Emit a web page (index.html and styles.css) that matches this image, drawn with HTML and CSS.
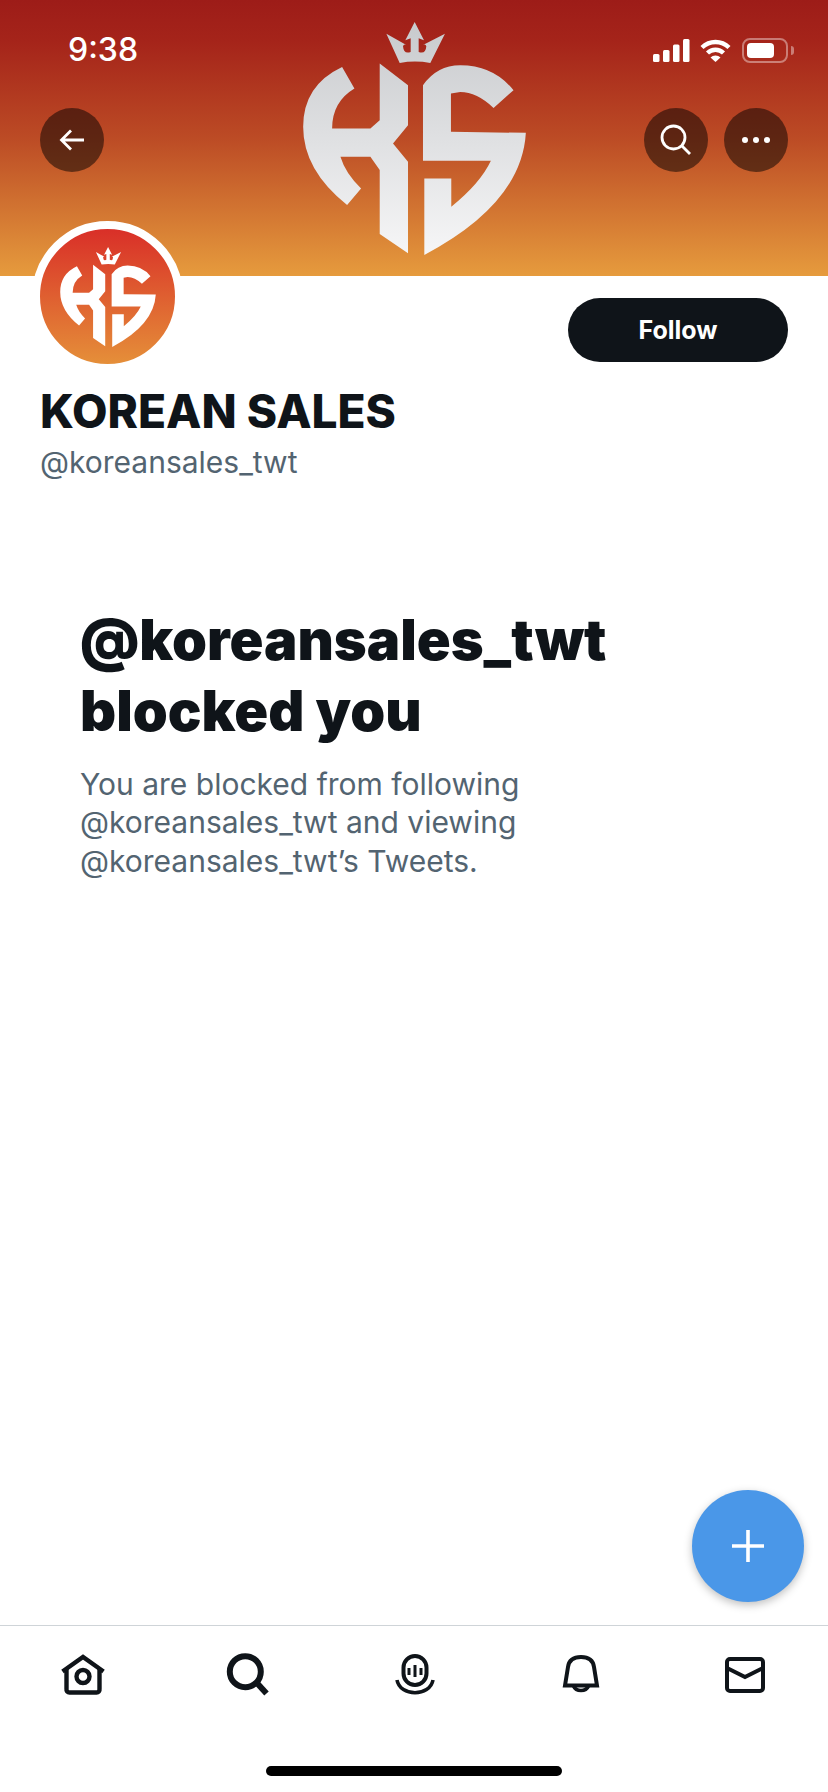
FILE: index.html
```html
<!DOCTYPE html>
<html lang="en">
<head>
    <meta charset="UTF-8">
    <meta name="viewport" content="width=device-width, initial-scale=1.0">
    <title>KOREAN SALES</title>
    <link rel="stylesheet" href="styles.css">
</head>
<body>
    <svg class="defs" width="0" height="0">
        <defs>
            <linearGradient id="logo-grad" gradientUnits="userSpaceOnUse" x1="0" y1="35" x2="0" y2="735">
                <stop offset="0" stop-color="#c8cacd"/>
                <stop offset="1" stop-color="#f6f6f7"/>
            </linearGradient>
            <g id="ks-logo">
                <path d="M403 35 L431 90 L415 84 L415 125 Q436 133 438 108 Q436 100 428 104 L494 70 L450 158 Q404 150 358 158 L318 70 L378 104 Q370 100 368 108 Q370 133 391 125 L391 84 L375 90 Z"/>
                <path d="M185 170 L222 235 Q155 275 155 355 L270 355 L298 330 L298 160 L383 225 L383 345 L338 400 L383 455 L383 730 L298 672 L298 480 L270 440 L180 440 Q195 490 242 535 L200 585 Q68 480 68 350 Q68 225 185 170 Z"/>
                <path d="M428 452 L428 225 Q470 165 540 165 Q640 165 700 240 L640 293 Q590 245 540 245 L512 250 L512 365 L737 368 Q725 580 432 735 L432 505 L513 505 L513 590 Q600 520 632 452 Z"/>
            </g>
        </defs>
    </svg>

    <div class="app">
        <header class="banner">
            <svg class="banner-logo" viewBox="68 35 669 700" fill="url(#logo-grad)"><use href="#ks-logo"/></svg>
            <div class="status-bar">
                <span class="clock">9:38</span>
                <div class="status-icons">
                    <svg class="signal" width="37" height="23" viewBox="0 0 37 23" fill="#fff">
                        <rect x="0" y="15" width="6.5" height="8" rx="1.5"/>
                        <rect x="10" y="11" width="6.5" height="12" rx="1.5"/>
                        <rect x="20" y="5.5" width="6.5" height="17.5" rx="1.5"/>
                        <rect x="30" y="0" width="6.5" height="23" rx="1.5"/>
                    </svg>
                    <svg class="wifi" width="31" height="24" viewBox="0 0 31 24" fill="none" stroke="#fff">
                        <path d="M2 9.5 A19.5 19.5 0 0 1 29 9.5" stroke-width="4.4"/>
                        <path d="M7.5 15 A11.5 11.5 0 0 1 23.5 15" stroke-width="4.4"/>
                        <path d="M15.5 24 L10.5 19.5 A7 7 0 0 1 20.5 19.5 Z" fill="#fff" stroke="none"/>
                    </svg>
                    <div class="battery"><div class="battery-level"></div></div>
                    <div class="battery-nub"></div>
                </div>
            </div>
            <div class="banner-nav">
                <button class="round-btn">
                    <svg width="30" height="30" viewBox="0 0 30 30" fill="none" stroke="#fff" stroke-width="2.8">
                        <path d="M27 15 H5 M14 5.5 L4.5 15 L14 24.5"/>
                    </svg>
                </button>
                <div class="nav-right">
                    <button class="round-btn">
                        <svg width="34" height="34" viewBox="0 0 34 34" fill="none" stroke="#fff" stroke-width="2.8">
                            <circle cx="14.5" cy="14.5" r="11.5"/>
                            <path d="M23 23 L31 31"/>
                        </svg>
                    </button>
                    <button class="round-btn">
                        <svg width="30" height="8" viewBox="0 0 30 8" fill="#fff">
                            <circle cx="4" cy="4" r="3"/>
                            <circle cx="15" cy="4" r="3"/>
                            <circle cx="26" cy="4" r="3"/>
                        </svg>
                    </button>
                </div>
            </div>
        </header>

        <main class="content">
            <div class="profile-top">
                <div class="avatar">
                    <svg class="avatar-logo" viewBox="68 35 669 700" fill="#fff"><use href="#ks-logo"/></svg>
                </div>
                <button class="follow-btn">Follow</button>
            </div>
            <div class="profile-names">
                <h2 class="name">KOREAN SALES</h2>
                <div class="handle">@koreansales_twt</div>
            </div>
            <section class="blocked">
                <h1>@koreansales_twt<br>blocked you</h1>
                <p>You are blocked from following<br>@koreansales_twt and viewing<br>@koreansales_twt’s Tweets.</p>
            </section>
        </main>

        <button class="fab">
            <svg width="34" height="34" viewBox="0 0 34 34" fill="none" stroke="#fff" stroke-width="3.6">
                <path d="M17 1 V33 M1 17 H33"/>
            </svg>
        </button>

        <footer class="tabbar">
            <nav class="tabs">
                <a class="tab">
                    <svg width="48" height="48" viewBox="0 0 48 48" fill="none" stroke="#0f1419" stroke-width="4.4">
                        <path d="M3.5 21.5 L24 7 L44.5 21.5"/>
                        <path d="M7.5 18 V39 A3 3 0 0 0 10.5 42.5 H37.5 A3 3 0 0 0 40.5 39 V18"/>
                        <circle cx="24" cy="26.5" r="6.5"/>
                    </svg>
                </a>
                <a class="tab">
                    <svg width="48" height="48" viewBox="0 0 48 48" fill="none" stroke="#0f1419" stroke-width="6">
                        <circle cx="21.3" cy="21.7" r="15.5"/>
                        <path d="M32.5 32.5 L42.5 43.5"/>
                    </svg>
                </a>
                <a class="tab">
                    <svg width="48" height="48" viewBox="0 0 48 48" fill="none" stroke="#0f1419" stroke-width="4">
                        <rect x="13.5" y="6" width="23" height="29" rx="11.5"/>
                        <path d="M19 18 V25 M25 15 V27 M31 18 V25" stroke-width="3"/>
                        <path d="M7 30 C10 47 40 47 43 30" stroke-width="3.6"/>
                    </svg>
                </a>
                <a class="tab">
                    <svg width="48" height="48" viewBox="0 0 48 48" fill="none" stroke="#0f1419" stroke-width="4">
                        <path d="M9 35.5 L12 17 C13 10 18 7 25 7 C32 7 37 10 38 17 L41 35.5 Z"/>
                        <path d="M17.5 36 A8 7 0 0 0 32.5 36" stroke-width="3.6"/>
                    </svg>
                </a>
                <a class="tab">
                    <svg width="48" height="48" viewBox="0 0 48 48" fill="none" stroke="#0f1419" stroke-width="4">
                        <rect x="6" y="9" width="36" height="32" rx="3"/>
                        <path d="M6 18 L24 27 L42 18"/>
                    </svg>
                </a>
            </nav>
            <div class="home-bar"></div>
        </footer>
    </div>
</body>
</html>
```

FILE: styles.css
```css
body {
    margin: 0;
    padding: 0;
    font-family: 'Inter', sans-serif;
    background-color: #ffffff;
    color: #0f1419;
}
.defs {
    position: absolute;
}
.app {
    position: relative;
    display: flex;
    flex-direction: column;
    width: 828px;
    height: 1792px;
    overflow: hidden;
}
button {
    border: none;
    padding: 0;
    font-family: inherit;
    cursor: pointer;
}

/* banner */
.banner {
    position: relative;
    height: 276px;
    box-sizing: border-box;
    background-image: linear-gradient(#9d1c18 0%, #a5241a 15%, #bc4b25 50%, #e69b3d 100%);
}
.banner-logo {
    position: absolute;
    top: 22px;
    left: 303px;
    width: 223px;
    height: 233px;
}
.status-bar {
    position: relative;
    display: flex;
    justify-content: space-between;
    align-items: center;
    height: 26px;
    padding: 37px 34px 0 68px;
    color: #ffffff;
}
.clock {
    font-size: 32px;
    font-weight: 500;
    line-height: 26px;
}
.status-icons {
    display: flex;
    align-items: center;
}
.signal {
    margin-right: 10px;
}
.wifi {
    margin-right: 11px;
}
.battery {
    width: 46px;
    height: 25px;
    box-sizing: border-box;
    padding: 3px;
    border: 2px solid rgba(255, 255, 255, 0.4);
    border-radius: 8px;
}
.battery-level {
    width: 27px;
    height: 100%;
    background-color: #ffffff;
    border-radius: 4px;
}
.battery-nub {
    width: 3px;
    height: 9px;
    margin-left: 3px;
    background-color: rgba(255, 255, 255, 0.4);
    border-radius: 0 3px 3px 0;
}
.banner-nav {
    position: relative;
    display: flex;
    justify-content: space-between;
    margin-top: 45px;
    padding: 0 40px;
}
.nav-right {
    display: flex;
    gap: 16px;
}
.round-btn {
    display: flex;
    align-items: center;
    justify-content: center;
    width: 64px;
    height: 64px;
    border-radius: 50%;
    background-color: rgba(0, 0, 0, 0.5);
}

/* profile */
.content {
    flex: 1;
}
.profile-top {
    display: flex;
    justify-content: space-between;
    align-items: flex-start;
    padding: 0 40px 0 32px;
}
.avatar {
    position: relative;
    display: flex;
    align-items: center;
    justify-content: center;
    width: 151px;
    height: 151px;
    box-sizing: border-box;
    margin-top: -55px;
    border: 8px solid #ffffff;
    border-radius: 50%;
    background-image: linear-gradient(#d92f28, #e58f39);
}
.avatar-logo {
    width: 96px;
    height: 100px;
}
.follow-btn {
    width: 220px;
    height: 64px;
    margin-top: 22px;
    border-radius: 32px;
    background-color: #0f1419;
    color: #ffffff;
    font-size: 25px;
    font-weight: 700;
}
.profile-names {
    padding: 12px 40px 0;
}
.name {
    margin: 0;
    font-size: 46px;
    font-weight: 800;
    line-height: 54px;
}
.handle {
    margin-top: 5px;
    font-size: 30px;
    line-height: 38px;
    color: #536471;
}

/* blocked message */
.blocked {
    padding: 124px 80px 0;
}
.blocked h1 {
    margin: 0;
    font-size: 56px;
    font-weight: 900;
    line-height: 70.5px;
}
.blocked p {
    margin: 19px 0 0;
    font-size: 30px;
    line-height: 38.4px;
    color: #536471;
}

/* floating button */
.fab {
    position: absolute;
    right: 24px;
    bottom: 190px;
    display: flex;
    align-items: center;
    justify-content: center;
    width: 112px;
    height: 112px;
    border-radius: 50%;
    background-color: #4a97e8;
    box-shadow: 0 3px 8px rgba(0, 0, 0, 0.25);
}

/* tab bar */
.tabbar {
    height: 167px;
    box-sizing: border-box;
    border-top: 1px solid #cfd4d8;
}
.tabs {
    display: grid;
    grid-template-columns: repeat(5, 1fr);
    padding-top: 24px;
}
.tab {
    display: flex;
    justify-content: center;
}
.home-bar {
    width: 296px;
    height: 10px;
    margin: 68px auto 0;
    background-color: #000000;
    border-radius: 5px;
}
```
